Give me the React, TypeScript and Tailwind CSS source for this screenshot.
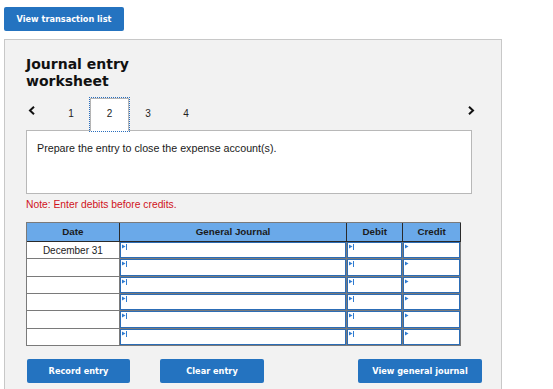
import React from "react";

const Flag: React.FC<{ bar?: boolean }> = ({ bar = true }) => (
  <svg width="6" height="6" viewBox="0 0 6 6" className="absolute left-[1px] top-[1px]">
    <path d="M0 0.5 L3.5 2.5 L0 4.5 Z" fill="#2e7bd1" />
    {bar && <rect x="4" y="0" width="1" height="6" fill="#2e7bd1" />}
  </svg>
);

const InputCell: React.FC<{ w: string; bar?: boolean }> = ({ w, bar }) => (
  <div className={`${w} border-r border-b border-[#7a7a7a] p-0 flex`}>
    <div className="relative flex-1 bg-white border border-[#2c6db6]">
      <Flag bar={bar} />
    </div>
  </div>
);

const rows = ["December 31", "", "", "", "", ""];
const rowH = ["h-[17px]", "h-[18px]", "h-[17px]", "h-[17px]", "h-[18px]", "h-[17px]"];

const BlueButton: React.FC<{ label: string; className?: string }> = ({ label, className = "" }) => (
  <button
    className={`block h-[24px] bg-[#2473c0] rounded-[2px] text-white font-bold text-[8.2px] font-['DejaVu_Sans',sans-serif] ${className}`}
  >
    {label}
  </button>
);

export default function App() {
  return (
    <div className="w-[553px] h-[389px] overflow-hidden bg-white font-['Liberation_Sans',Arial,sans-serif]">
      <div className="pt-[7px] pl-[4px] flex">
        <BlueButton label="View transaction list" className="w-[120px]" />
      </div>

      <div className="mt-[8px] ml-[4px] w-[498px] h-[360px] border border-[#c8c8c8] bg-[#f2f2f2] pl-[21px] pt-[16px]">
        <h1 className="font-['DejaVu_Sans',sans-serif] font-bold text-[14px] leading-[17px] text-[#111] w-[140px]">
          Journal entry worksheet
        </h1>

        {/* tabs */}
        <div className="mt-[8px] h-[32px] flex items-start w-[451px] text-[10px] text-[#222]">
          <div className="w-[26px] h-[32px] pt-[8px] pl-[2px]">
            <svg width="8" height="9" viewBox="0 0 8 9">
              <polyline points="6,0.8 2,4.5 6,8.2" fill="none" stroke="#111" strokeWidth="2" />
            </svg>
          </div>
          <div className="w-[38px] h-[32px] pt-[8px] text-center">1</div>
          <div className="w-[39px] h-[33px] pt-[7px] text-center bg-white border border-[#b5b5b5] border-b-0 outline outline-dotted outline-1 outline-[#2a6ebd]">
            2
          </div>
          <div className="w-[38px] h-[32px] pt-[8px] text-center">3</div>
          <div className="w-[38px] h-[32px] pt-[8px] text-center">4</div>
          <div className="flex-1" />
          <div className="w-[10px] h-[32px] pt-[8px]">
            <svg width="8" height="9" viewBox="0 0 8 9">
              <polyline points="2,0.8 6,4.5 2,8.2" fill="none" stroke="#111" strokeWidth="2" />
            </svg>
          </div>
        </div>

        {/* instruction */}
        <div className="w-[446px] h-[64px] border border-[#b8b8b8] bg-white pl-[10px] pt-[9px] text-[10.7px] text-[#1a1a1a]">
          Prepare the entry to close the expense account(s).
        </div>

        <p className="mt-[5px] text-[10.3px] leading-[12px] text-[#d0121b]">Note: Enter debits before credits.</p>

        {/* table */}
        <div className="mt-[11px] w-[435px] border-l border-t border-[#7a7a7a]">
          <div className="flex h-[19px] bg-[#6aa9e9] text-[9.8px] font-bold text-[#1b1b1b] border-b border-[#2a2a2a]">
            <div className="w-[93px] border-r border-[#2a2a2a] flex items-center justify-center">Date</div>
            <div className="w-[228px] border-r border-[#2a2a2a] flex items-center justify-center">General Journal</div>
            <div className="w-[56px] border-r border-[#2a2a2a] flex items-center justify-center">Debit</div>
            <div className="w-[58px] border-r border-[#2a2a2a] flex items-center justify-center">Credit</div>
          </div>
          {rows.map((d, i) => (
            <div key={i} className={`flex ${rowH[i]}`}>
              <div className="w-[93px] border-r border-b border-[#7a7a7a] bg-white flex items-center justify-center text-[10px] text-[#222]">
                {d}
              </div>
              <InputCell w="w-[228px]" />
              <InputCell w="w-[56px]" />
              <InputCell w="w-[58px]" bar={false} />
            </div>
          ))}
        </div>

        {/* buttons */}
        <div className="mt-[13px] flex">
          <BlueButton label="Record entry" className="w-[103px] ml-[1px]" />
          <BlueButton label="Clear entry" className="w-[104px] ml-[30px]" />
          <BlueButton label="View general journal" className="w-[124px] ml-[94px]" />
        </div>
      </div>
    </div>
  );
}
